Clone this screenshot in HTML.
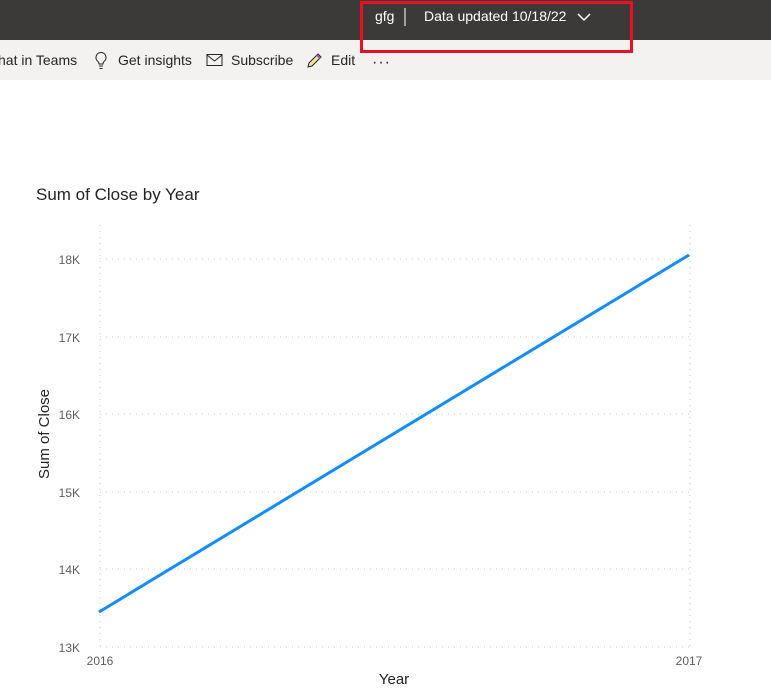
<!DOCTYPE html>
<html><head><style>
body{margin:0;width:771px;height:699px;position:relative;overflow:hidden;background:#fff;font-family:"Liberation Sans",sans-serif}
.top{position:absolute;left:0;top:0;width:771px;height:40px;background:#3b3a39}
.tb{position:absolute;left:0;top:40px;width:771px;height:40px;background:#f3f2f1}
.t{position:absolute;white-space:nowrap}
</style></head><body>
<div class="top"></div>
<div class="tb"></div>
<div class="t" style="left:375px;top:8px;color:#fff;font-size:14px">gfg</div>
<div style="position:absolute;left:404px;top:8px;width:2px;height:18px;background:#a19f9d"></div>
<div class="t" style="left:424px;top:8px;color:#fff;font-size:14px">Data updated 10/18/22</div>
<svg style="position:absolute;left:576px;top:12px" width="16" height="10"><path d="M2 2 L8 8 L14 2" stroke="#fff" stroke-width="1.5" fill="none"/></svg>
<div style="position:absolute;left:360px;top:1px;width:267px;height:46px;border:3px solid #e81123"></div>
<div class="t" style="left:-2px;top:52px;color:#252423;font-size:14px">hat in Teams</div>
<svg style="position:absolute;left:94px;top:51px" width="14" height="19"><path d="M7 1.5a5 5 0 0 0-3 9c.8.8 1 1.6 1 2.5h4c0-.9.2-1.7 1-2.5a5 5 0 0 0-3-9zM5 15h4M5.5 17.5h3" stroke="#252423" fill="none"/></svg>
<div class="t" style="left:118px;top:52px;color:#252423;font-size:14px">Get insights</div>
<svg style="position:absolute;left:206px;top:53px" width="18" height="14"><rect x="1" y="1.5" width="15" height="11" stroke="#252423" fill="none"/><path d="M1 2l7.5 6 7.5-6" stroke="#252423" fill="none"/></svg>
<div class="t" style="left:231px;top:52px;color:#252423;font-size:14px">Subscribe</div>
<svg style="position:absolute;left:306px;top:51px" width="18" height="18"><path d="M2 16l1-4 9-9 3 3-9 9z" stroke="#252423" fill="#f3e6a0"/><path d="M11 4l3 3" stroke="#8a5cb0" stroke-width="2"/></svg>
<div class="t" style="left:331px;top:52px;color:#252423;font-size:14px">Edit</div>
<div class="t" style="left:372px;top:54px;color:#252423;font-size:16px;letter-spacing:1px">···</div>
<div class="t" style="left:36px;top:185px;color:#252423;font-size:17px">Sum of Close by Year</div>
<svg style="position:absolute;left:0;top:0" width="771" height="699">
<g stroke="#c8c6c4" stroke-dasharray="1 5" stroke-width="1">
<line x1="100" y1="259" x2="690" y2="259"/><line x1="100" y1="337" x2="690" y2="337"/>
<line x1="100" y1="414" x2="690" y2="414"/><line x1="100" y1="492" x2="690" y2="492"/>
<line x1="100" y1="569" x2="690" y2="569"/><line x1="100" y1="647" x2="690" y2="647"/>
<line x1="100" y1="225" x2="100" y2="647"/><line x1="690" y1="225" x2="690" y2="647"/>
</g>
<line x1="99" y1="612" x2="689" y2="255" stroke="#118dff" stroke-width="3"/>
<g font-size="12" fill="#605e5c" font-family="Liberation Sans" text-anchor="end">
<text x="80" y="264">18K</text><text x="80" y="342">17K</text><text x="80" y="419">16K</text>
<text x="80" y="497">15K</text><text x="80" y="574">14K</text><text x="80" y="652">13K</text>
</g>
<text x="100" y="665" font-size="12" fill="#605e5c" text-anchor="middle" font-family="Liberation Sans">2016</text>
<text x="689" y="665" font-size="12" fill="#605e5c" text-anchor="middle" font-family="Liberation Sans">2017</text>
<text x="394" y="684" font-size="15" fill="#252423" text-anchor="middle" font-family="Liberation Sans">Year</text>
<text transform="translate(49,434) rotate(-90)" font-size="15" fill="#252423" text-anchor="middle" font-family="Liberation Sans">Sum of Close</text>
</svg>
</body></html>
